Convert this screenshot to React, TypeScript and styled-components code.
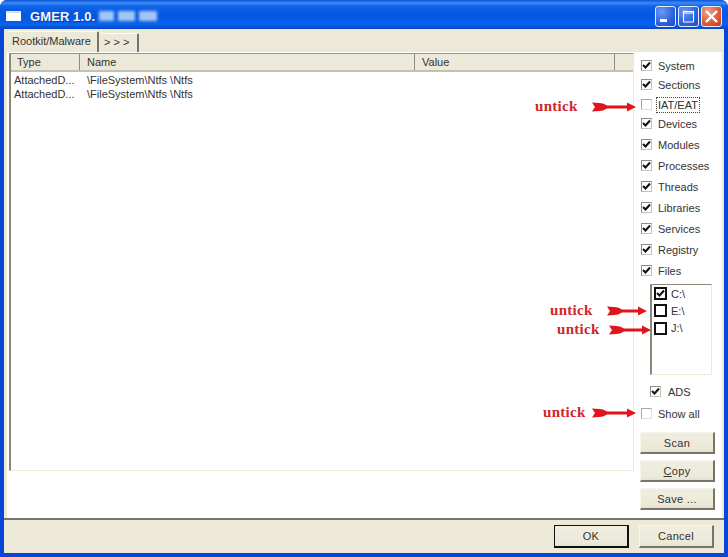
import React from "react"
import styled, { createGlobalStyle } from "styled-components"

const Global = createGlobalStyle`
html, body { margin: 0; padding: 0; background: #fff; }
body { font-family: "Liberation Sans", Arial, sans-serif; font-size: 11px; color: #333; }
`
const Window = styled.div`
width: 728px;
height: 557px;
display: flex;
flex-direction: column;
box-sizing: border-box;
padding: 0 4px 4px 4px;
background: #0746d6;
border-radius: 7px 7px 0 0;
overflow: hidden;
`
const TitleBar = styled.div`
height: 29px;
margin: 0 -4px;
padding: 3px 6px 0 6px;
box-sizing: border-box;
display: flex;
align-items: center;
flex-shrink: 0;
background: linear-gradient(180deg, #0a52d8 0%, #3a8cf4 10%, #0d62e6 22%, #0456e2 55%, #0a62ec 85%, #0547c4 100%);
`
const AppIcon = styled.div`
width: 15px;
height: 10px;
background: #fff;
border-top: 2px solid #d8e6fa;
box-sizing: border-box;
margin-right: 9px;
`
const Title = styled.span`
font-weight: bold;
font-size: 13px;
color: #f4f8ff;
letter-spacing: 0.1px;
white-space: nowrap;
text-shadow: 1px 1px 0 #0a3aa8;
`
const Blurred = styled.span<{ $w: number }>`
display: inline-block;
width: ${p => p.$w}px;
height: 10px;
margin-left: 4px;
background: #a4c6f6;
filter: blur(1.5px);
`
const Controls = styled.div`
margin-left: auto;
display: flex;
gap: 2px;
`
const ControlButton = styled.div<{ $close?: boolean }>`
width: 21px;
height: 21px;
box-sizing: border-box;
border: 1px solid #e8eefc;
border-radius: 3px;
display: flex;
align-items: center;
justify-content: center;
background: ${p => p.$close
  ? "radial-gradient(circle at 30% 25%, #f0a088, #dc5a36 60%, #c23c1c)"
  : "radial-gradient(circle at 30% 25%, #6c98f4, #2f62dc 60%, #1f48c0)"};
`
const Client = styled.div`
flex: 1;
display: flex;
flex-direction: column;
min-height: 0;
background: #ece9d8;
`
const TabBar = styled.div`
height: 23px;
flex-shrink: 0;
display: flex;
align-items: flex-end;
padding-left: 3px;
`
const Tab = styled.div<{ $w: number; $h: number }>`
width: ${p => p.$w}px;
height: ${p => p.$h}px;
box-sizing: border-box;
padding: 0 0 2px 5px;
display: flex;
align-items: center;
border-top: 1px solid #fbfaf4;
border-right: 2px solid #77756a;
border-radius: 2px 2px 0 0;
white-space: nowrap;
`
const Main = styled.div`
flex: 1;
min-height: 0;
display: flex;
background: #fff;
margin: 0 2px 0 3px;
`
const LeftPane = styled.div`
width: 627px;
padding: 1px 0 0 2px;
box-sizing: border-box;
flex-shrink: 0;
`
const ListView = styled.div`
height: 418px;
box-sizing: border-box;
border-left: 2px solid #8b8878;
border-top: 1px solid #9a9786;
border-right: 1px solid #ece9d8;
border-bottom: 1px solid #ece9d8;
`
const HeaderRow = styled.div`
height: 16px;
display: flex;
background: #ece9d8;
border-bottom: 2px solid #c4c1ae;
`
const HeaderCell = styled.div<{ $w: number }>`
width: ${p => p.$w}px;
box-sizing: border-box;
padding: 1px 0 0 7px;
border-right: 1px solid #8e8b7c;
line-height: 15px;
flex-shrink: 0;
&:first-child { padding-left: 6px; }
`
const Rows = styled.div`
padding-top: 1px;
`
const ListRow = styled.div`
height: 14px;
display: flex;
line-height: 14px;
`
const TypeCell = styled.div`
width: 76px;
padding-left: 3px;
box-sizing: border-box;
flex-shrink: 0;
`
const Sidebar = styled.div`
width: 88px;
display: flex;
flex-direction: column;
padding: 4px 0 0 7px;
box-sizing: border-box;
`
const CheckRow = styled.div<{ $after?: number; $indent?: number; $gap?: number }>`
height: 19px;
display: flex;
align-items: center;
gap: ${p => p.$gap ?? 6}px;
margin-bottom: ${p => p.$after ?? 0}px;
margin-left: ${p => p.$indent ?? 0}px;
flex-shrink: 0;
`
const Box = styled.div<{ $off?: boolean }>`
width: 11px;
height: 11px;
flex-shrink: 0;
box-sizing: border-box;
display: flex;
align-items: center;
justify-content: center;
background: #fff;
border: 1px solid ${p => p.$off ? "#a8a79c" : "#8e8d84"};
border-right-color: ${p => p.$off ? "#e0dfd6" : "#c4c3b8"};
border-bottom-color: ${p => p.$off ? "#e0dfd6" : "#c4c3b8"};
`
const Label = styled.span<{ $focus?: boolean }>`
white-space: nowrap;
padding: 1px;
margin-left: -1px;
outline: ${p => p.$focus ? "1px dotted #444" : "none"};
`
const DriveList = styled.div`
width: 62px;
height: 91px;
margin: 4px 0 7px 9px;
box-sizing: border-box;
border-left: 2px solid #8b8878;
border-top: 1px solid #8b8878;
border-right: 1px solid #ece9d8;
border-bottom: 1px solid #ece9d8;
display: flex;
flex-direction: column;
`
const DriveRow = styled.div<{ $h: number }>`
height: ${p => p.$h}px;
display: flex;
align-items: center;
gap: 4px;
padding-left: 2px;
flex-shrink: 0;
`
const DriveBox = styled.div`
width: 13px;
height: 13px;
box-sizing: border-box;
border: 2px solid #111;
background: #fff;
display: flex;
align-items: center;
justify-content: center;
`
const SideButtons = styled.div`
display: flex;
flex-direction: column;
gap: 6px;
margin: 9px 0 0 -1px;
`
const Button = styled.div<{ $default?: boolean; $h?: number }>`
width: 75px;
height: ${p => p.$h ?? 22}px;
box-sizing: border-box;
display: flex;
align-items: center;
justify-content: center;
background: linear-gradient(180deg, #f0eee1 0%, #ece9d8 85%, #e4e1ce 100%);
letter-spacing: 0.3px;
border: 1px solid ${p => p.$default ? "#111" : "#f6f5ee"};
border-right: 2px solid ${p => p.$default ? "#111" : "#77756a"};
border-bottom: 2px solid ${p => p.$default ? "#111" : "#77756a"};
`
const Underlined = styled.span`
text-decoration: underline;
`
const Footer = styled.div`
height: 35px;
flex-shrink: 0;
box-sizing: border-box;
border-top: 2px solid #77756a;
display: flex;
justify-content: flex-end;
gap: 10px;
padding: 5px 10px 0 0;
`
const Note = styled.div<{ $x: number; $y: number; $gap: number }>`
position: absolute;
left: ${p => p.$x}px;
top: ${p => p.$y}px;
display: flex;
align-items: center;
gap: ${p => p.$gap}px;
`
const NoteText = styled.span`
font-family: "Liberation Serif", "Times New Roman", serif;
font-weight: bold;
font-size: 15px;
letter-spacing: 0.3px;
line-height: 16px;
color: #d0262c;
`
const NoteArrow = styled.svg`
margin-top: 2px;
margin-left: -1px;
`
const Tick = ({ size = 9 }: { size?: number }) => (
  <svg width={size} height={size} viewBox="0 0 9 9">
    <path d="M1 4 L3.5 6.5 L8 1.5" fill="none" stroke="#111" strokeWidth="2" />
  </svg>
)

const Arrow = ({ w }: { w: number }) => (
  <NoteArrow width={w} height="10" viewBox={`0 0 ${w} 10`}>
    <path
      d={`M0 0.5 L7 1 L11 1.5 L15 3.5 L${w - 9} 3.5 L${w - 9} 0.5 L${w} 5 L${w - 9} 9.5 L${w - 9} 6.5 L15 6.5 L11 8.5 L7 9 L0 9.5 L3 5 Z`}
      fill="#e0141a"
    />
  </NoteArrow>
)

const checks = [
  { name: "System", after: 0 },
  { name: "Sections", after: 1 },
  { name: "IAT/EAT", after: 0, off: true, focus: true },
  { name: "Devices", after: 2 },
  { name: "Modules", after: 2 },
  { name: "Processes", after: 2 },
  { name: "Threads", after: 2 },
  { name: "Libraries", after: 2 },
  { name: "Services", after: 2 },
  { name: "Registry", after: 2 },
  { name: "Files", after: 0 },
]

const notes = [
  { x: 535, y: 98, gap: 15, w: 44 },
  { x: 550, y: 302, gap: 15, w: 40 },
  { x: 557, y: 321, gap: 10, w: 42 },
  { x: 543, y: 404, gap: 7, w: 44 },
]

const App = () => {
  return (
    <>
      <Global />
      <Window>
        <TitleBar>
          <AppIcon />
          <Title>GMER 1.0.</Title>
          <Blurred $w={15} />
          <Blurred $w={17} />
          <Blurred $w={18} />
          <Controls>
            <ControlButton>
              <svg width="13" height="13" viewBox="0 0 13 13">
                <rect x="1" y="9" width="7" height="3" fill="#fff" />
              </svg>
            </ControlButton>
            <ControlButton>
              <svg width="13" height="13" viewBox="0 0 13 13">
                <path d="M1 1.5 H12 M1 3 H12 M1.5 1 V12 H11.5 V1" fill="none" stroke="#fff" strokeWidth="1" />
              </svg>
            </ControlButton>
            <ControlButton $close>
              <svg width="15" height="15" viewBox="0 0 15 15">
                <path d="M2 2 L13 13 M13 2 L2 13" fill="none" stroke="#fff" strokeWidth="2.4" />
              </svg>
            </ControlButton>
          </Controls>
        </TitleBar>
        <Client>
          <TabBar>
            <Tab $w={92} $h={21}>Rootkit/Malware</Tab>
            <Tab $w={40} $h={19}>&gt; &gt; &gt;</Tab>
          </TabBar>
          <Main>
            <LeftPane>
              <ListView>
                <HeaderRow>
                  <HeaderCell $w={69}>Type</HeaderCell>
                  <HeaderCell $w={335}>Name</HeaderCell>
                  <HeaderCell $w={200}>Value</HeaderCell>
                </HeaderRow>
                <Rows>
                  <ListRow>
                    <TypeCell>AttachedD...</TypeCell>
                    <span>\FileSystem\Ntfs \Ntfs</span>
                  </ListRow>
                  <ListRow>
                    <TypeCell>AttachedD...</TypeCell>
                    <span>\FileSystem\Ntfs \Ntfs</span>
                  </ListRow>
                </Rows>
              </ListView>
            </LeftPane>
            <Sidebar>
              {checks.map(c => (
                <CheckRow key={c.name} $after={c.after}>
                  <Box $off={c.off}>{!c.off && <Tick />}</Box>
                  <Label $focus={c.focus}>{c.name}</Label>
                </CheckRow>
              ))}
              <DriveList>
                <DriveRow $h={17}>
                  <DriveBox><Tick /></DriveBox>
                  <span>C:\</span>
                </DriveRow>
                <DriveRow $h={17}>
                  <DriveBox />
                  <span>E:\</span>
                </DriveRow>
                <DriveRow $h={18}>
                  <DriveBox />
                  <span>J:\</span>
                </DriveRow>
              </DriveList>
              <CheckRow $indent={9} $after={3} $gap={7}>
                <Box><Tick /></Box>
                <Label>ADS</Label>
              </CheckRow>
              <CheckRow>
                <Box $off />
                <Label>Show all</Label>
              </CheckRow>
              <SideButtons>
                <Button>Scan</Button>
                <Button><span><Underlined>C</Underlined>opy</span></Button>
                <Button>Save ...</Button>
              </SideButtons>
            </Sidebar>
          </Main>
          <Footer>
            <Button $default $h={23}>OK</Button>
            <Button $h={23}>Cancel</Button>
          </Footer>
        </Client>
      </Window>
      {notes.map(n => (
        <Note key={n.y} $x={n.x} $y={n.y} $gap={n.gap}>
          <NoteText>untick</NoteText>
          <Arrow w={n.w} />
        </Note>
      ))}
    </>
  )
}

export default App
